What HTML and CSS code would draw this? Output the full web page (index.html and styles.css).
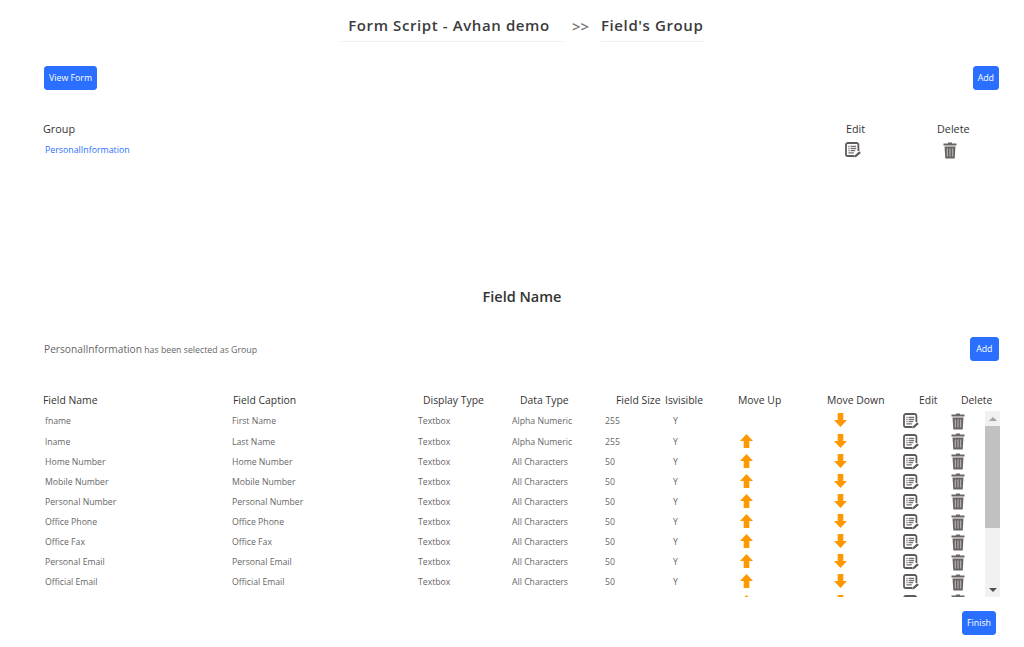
FILE: index.html
```html
<!DOCTYPE html>
<html>
<head>
  <meta charset="UTF-8">
  <title>Field's Group</title>
  <link rel="stylesheet" href="styles.css">
</head>
<body>
  <svg class="defs" width="0" height="0">
    <symbol id="edit" viewBox="0 0 16 16">
      <path d="M13.400 9V2.800a1.800 1.800 0 0 0-1.800-1.800H2.800A1.800 1.800 0 0 0 1 2.800v9.400A1.800 1.800 0 0 0 2.800 14h6.500" fill="#fff" stroke="#5f5a5a" stroke-width="1.800"/>
      <path d="M3.400 4.300h1.200M5.600 4.300h5.600M3.400 6.500h1.200M5.600 6.500h5.600M3.400 8.700h1.200M5.600 8.700h4.600M3.400 10.900h5.400" fill="none" stroke="#77716f" stroke-width="1.300"/>
      <path d="M9.200 15.500l.7-2.300 4.300-3.900 1.600 1.600-4.300 3.900z" fill="#5f5a5a"/>
    </symbol>
    <symbol id="trash" viewBox="0 0 14 17">
      <path d="M5 1.500V.5h4v1h4.500v2H.5v-2z" fill="#6a6463"/>
      <path d="M1.500 4.500h11l-.8 12H2.300z" fill="#6a6463"/>
      <path d="M4.300 6.500v8M7 6.500v8M9.700 6.500v8" stroke="#c8c6c5" stroke-width=".9"/>
    </symbol>
    <symbol id="up" viewBox="0 0 14 15">
      <path d="M7 0l7 7.500H10V15H4V7.500H0z" fill="#ff9800"/>
    </symbol>
    <symbol id="down" viewBox="0 0 14 15">
      <path d="M7 15l7-7.500H10V0H4v7.500H0z" fill="#ff9800"/>
    </symbol>
  </svg>

  <header class="title-bar">
    <h1 class="title title-form">Form Script - Avhan demo</h1>
    <span class="title-sep">&gt;&gt;</span>
    <h1 class="title title-group">Field's Group</h1>
  </header>

  <div class="actions actions-top">
    <button class="btn">View Form</button>
    <button class="btn">Add</button>
  </div>

  <section class="groups">
    <div class="group-row group-head">
      <span>Group</span>
      <span>Edit</span>
      <span>Delete</span>
    </div>
    <div class="group-row group-item">
      <a class="link" href="#">PersonalInformation</a>
      <svg class="ico-edit"><use href="#edit"/></svg>
      <svg class="ico-trash"><use href="#trash"/></svg>
    </div>
  </section>

  <h2 class="section-title">Field Name</h2>

  <div class="actions actions-selected">
    <p class="selected"><span class="selected-name">PersonalInformation</span> has been selected as Group</p>
    <button class="btn btn-wide">Add</button>
  </div>

  <div class="field-head">
    <span>Field Name</span><span>Field Caption</span><span>Display Type</span><span>Data Type</span><span>Field Size</span><span>Isvisible</span><span>Move Up</span><span>Move Down</span><span>Edit</span><span>Delete</span>
  </div>

  <div class="field-list">
    <div class="field-rows">
      <div class="field-row"><span>fname</span><span>First Name</span><span>Textbox</span><span>Alpha Numeric</span><span>255</span><span>Y</span><i></i><svg class="ico-arrow"><use href="#down"/></svg><svg class="ico-edit"><use href="#edit"/></svg><svg class="ico-trash"><use href="#trash"/></svg></div>
      <div class="field-row"><span>lname</span><span>Last Name</span><span>Textbox</span><span>Alpha Numeric</span><span>255</span><span>Y</span><svg class="ico-arrow"><use href="#up"/></svg><svg class="ico-arrow"><use href="#down"/></svg><svg class="ico-edit"><use href="#edit"/></svg><svg class="ico-trash"><use href="#trash"/></svg></div>
      <div class="field-row"><span>Home Number</span><span>Home Number</span><span>Textbox</span><span>All Characters</span><span>50</span><span>Y</span><svg class="ico-arrow"><use href="#up"/></svg><svg class="ico-arrow"><use href="#down"/></svg><svg class="ico-edit"><use href="#edit"/></svg><svg class="ico-trash"><use href="#trash"/></svg></div>
      <div class="field-row"><span>Mobile Number</span><span>Mobile Number</span><span>Textbox</span><span>All Characters</span><span>50</span><span>Y</span><svg class="ico-arrow"><use href="#up"/></svg><svg class="ico-arrow"><use href="#down"/></svg><svg class="ico-edit"><use href="#edit"/></svg><svg class="ico-trash"><use href="#trash"/></svg></div>
      <div class="field-row"><span>Personal Number</span><span>Personal Number</span><span>Textbox</span><span>All Characters</span><span>50</span><span>Y</span><svg class="ico-arrow"><use href="#up"/></svg><svg class="ico-arrow"><use href="#down"/></svg><svg class="ico-edit"><use href="#edit"/></svg><svg class="ico-trash"><use href="#trash"/></svg></div>
      <div class="field-row"><span>Office Phone</span><span>Office Phone</span><span>Textbox</span><span>All Characters</span><span>50</span><span>Y</span><svg class="ico-arrow"><use href="#up"/></svg><svg class="ico-arrow"><use href="#down"/></svg><svg class="ico-edit"><use href="#edit"/></svg><svg class="ico-trash"><use href="#trash"/></svg></div>
      <div class="field-row"><span>Office Fax</span><span>Office Fax</span><span>Textbox</span><span>All Characters</span><span>50</span><span>Y</span><svg class="ico-arrow"><use href="#up"/></svg><svg class="ico-arrow"><use href="#down"/></svg><svg class="ico-edit"><use href="#edit"/></svg><svg class="ico-trash"><use href="#trash"/></svg></div>
      <div class="field-row"><span>Personal Email</span><span>Personal Email</span><span>Textbox</span><span>All Characters</span><span>50</span><span>Y</span><svg class="ico-arrow"><use href="#up"/></svg><svg class="ico-arrow"><use href="#down"/></svg><svg class="ico-edit"><use href="#edit"/></svg><svg class="ico-trash"><use href="#trash"/></svg></div>
      <div class="field-row"><span>Official Email</span><span>Official Email</span><span>Textbox</span><span>All Characters</span><span>50</span><span>Y</span><svg class="ico-arrow"><use href="#up"/></svg><svg class="ico-arrow"><use href="#down"/></svg><svg class="ico-edit"><use href="#edit"/></svg><svg class="ico-trash"><use href="#trash"/></svg></div>
      <div class="field-row"><span></span><span></span><span></span><span></span><span></span><span></span><svg class="ico-arrow"><use href="#up"/></svg><svg class="ico-arrow"><use href="#down"/></svg><svg class="ico-edit"><use href="#edit"/></svg><svg class="ico-trash"><use href="#trash"/></svg></div>
    </div>
    <div class="scrollbar">
      <div class="scroll-btn"><div class="tri-up"></div></div>
      <div class="scroll-track"><div class="scroll-thumb"></div></div>
      <div class="scroll-btn"><div class="tri-down"></div></div>
    </div>
  </div>

  <div class="actions actions-finish">
    <button class="btn">Finish</button>
  </div>
</body>
</html>
```

FILE: styles.css
```css
body {
    margin: 0;
    background: #fff;
    color: #212529;
    font-family: "Open Sans", "Noto Sans", sans-serif;
    font-size: 8.700px;
    overflow: hidden;
}

.defs {
    position: absolute;
}

.title-bar {
    display: flex;
    justify-content: center;
    height: 42px;
    padding-left: 21px;
}

.title {
    margin: 0;
    height: 41px;
    line-height: 51px;
    font-size: 15px;
    font-weight: 600;
    letter-spacing: .6px;
    color: #3c3c3c;
    border-bottom: 1px solid #f0f0f0;
}

.title-form {
    width: 218px;
    padding-right: 5px;
    text-align: center;
}

.title-group {
    width: 104px;
}

.title-sep {
    width: 29px;
    margin-left: 9px;
    line-height: 52px;
    font-size: 15px;
    font-weight: 600;
    color: #777;
}

.actions {
    display: flex;
    justify-content: space-between;
    align-items: center;
}

.actions-top {
    margin: 24px 25px 0 44px;
}

.btn {
    height: 24px;
    padding: 0 4px;
    background: #2a6fff;
    color: #fff;
    border: 1px solid #2a6fff;
    border-radius: 3px;
    font-family: inherit;
    font-size: 8.800px;
    font-weight: 500;
}

.btn-wide {
    padding: 0 5.500px;
}

.groups {
    margin: 31px 0 0 43px;
}

.group-row {
    display: grid;
    grid-template-columns: 803px 91px 1fr;
}

.group-head {
    font-size: 10.800px;
    line-height: 16px;
    color: #333;
}

.group-item {
    margin-top: 3px;
    height: 20px;
    align-items: center;
}

.group-item .ico-edit {
    margin-left: -1px;
}

.group-item .ico-trash {
    margin-left: 6px;
}

.link {
    margin-left: 2px;
    color: #2a6fff;
    text-decoration: none;
    font-size: 8.800px;
}

.ico-edit {
    width: 16px;
    height: 16px;
}

.ico-trash {
    width: 14px;
    height: 17px;
}

.ico-arrow {
    width: 13px;
    height: 14px;
    margin-bottom: 2px;
}

.section-title {
    margin: 127px 0 0;
    padding-left: 20px;
    text-align: center;
    font-size: 14.500px;
    font-weight: 600;
    line-height: 20px;
    color: #333;
}

.actions-selected {
    margin: 30px 25px 0 44px;
}

.selected {
    margin: 0;
    font-size: 8.750px;
    color: #666;
}

.selected-name {
    font-size: 10.200px;
}

.field-head {
    display: grid;
    grid-template-columns: 190px 190px 97px 96px 49px 73px 89px 92px 42px 1fr;
    margin: 31px 0 0 43px;
    font-size: 10.400px;
    line-height: 16px;
    color: #333;
}

.field-list {
    display: flex;
    height: 186px;
    margin: 3px 24px 0 45px;
    overflow: hidden;
}

.field-rows {
    width: 940px;
    padding-top: .3px;
}

.field-row {
    display: grid;
    grid-template-columns: 187px 186px 94px 93px 68px 67px 94px 69px 48px 1fr;
    align-items: center;
    height: 20.150px;
    color: #666;
}

.scrollbar {
    display: flex;
    flex-direction: column;
    width: 15px;
    background: #f1f1f1;
}

.scroll-btn {
    display: flex;
    align-items: center;
    justify-content: center;
    height: 15px;
}

.tri-up {
    border: 4px solid transparent;
    border-top: 0;
    border-bottom: 4px solid #a3a3a3;
}

.tri-down {
    border: 4px solid transparent;
    border-bottom: 0;
    border-top: 4px solid #505050;
}

.scroll-track {
    flex: 1;
}

.scroll-thumb {
    height: 102px;
    background: #c1c1c1;
}

.actions-finish {
    justify-content: flex-end;
    margin: 14px 28px 0 0;
}
```
